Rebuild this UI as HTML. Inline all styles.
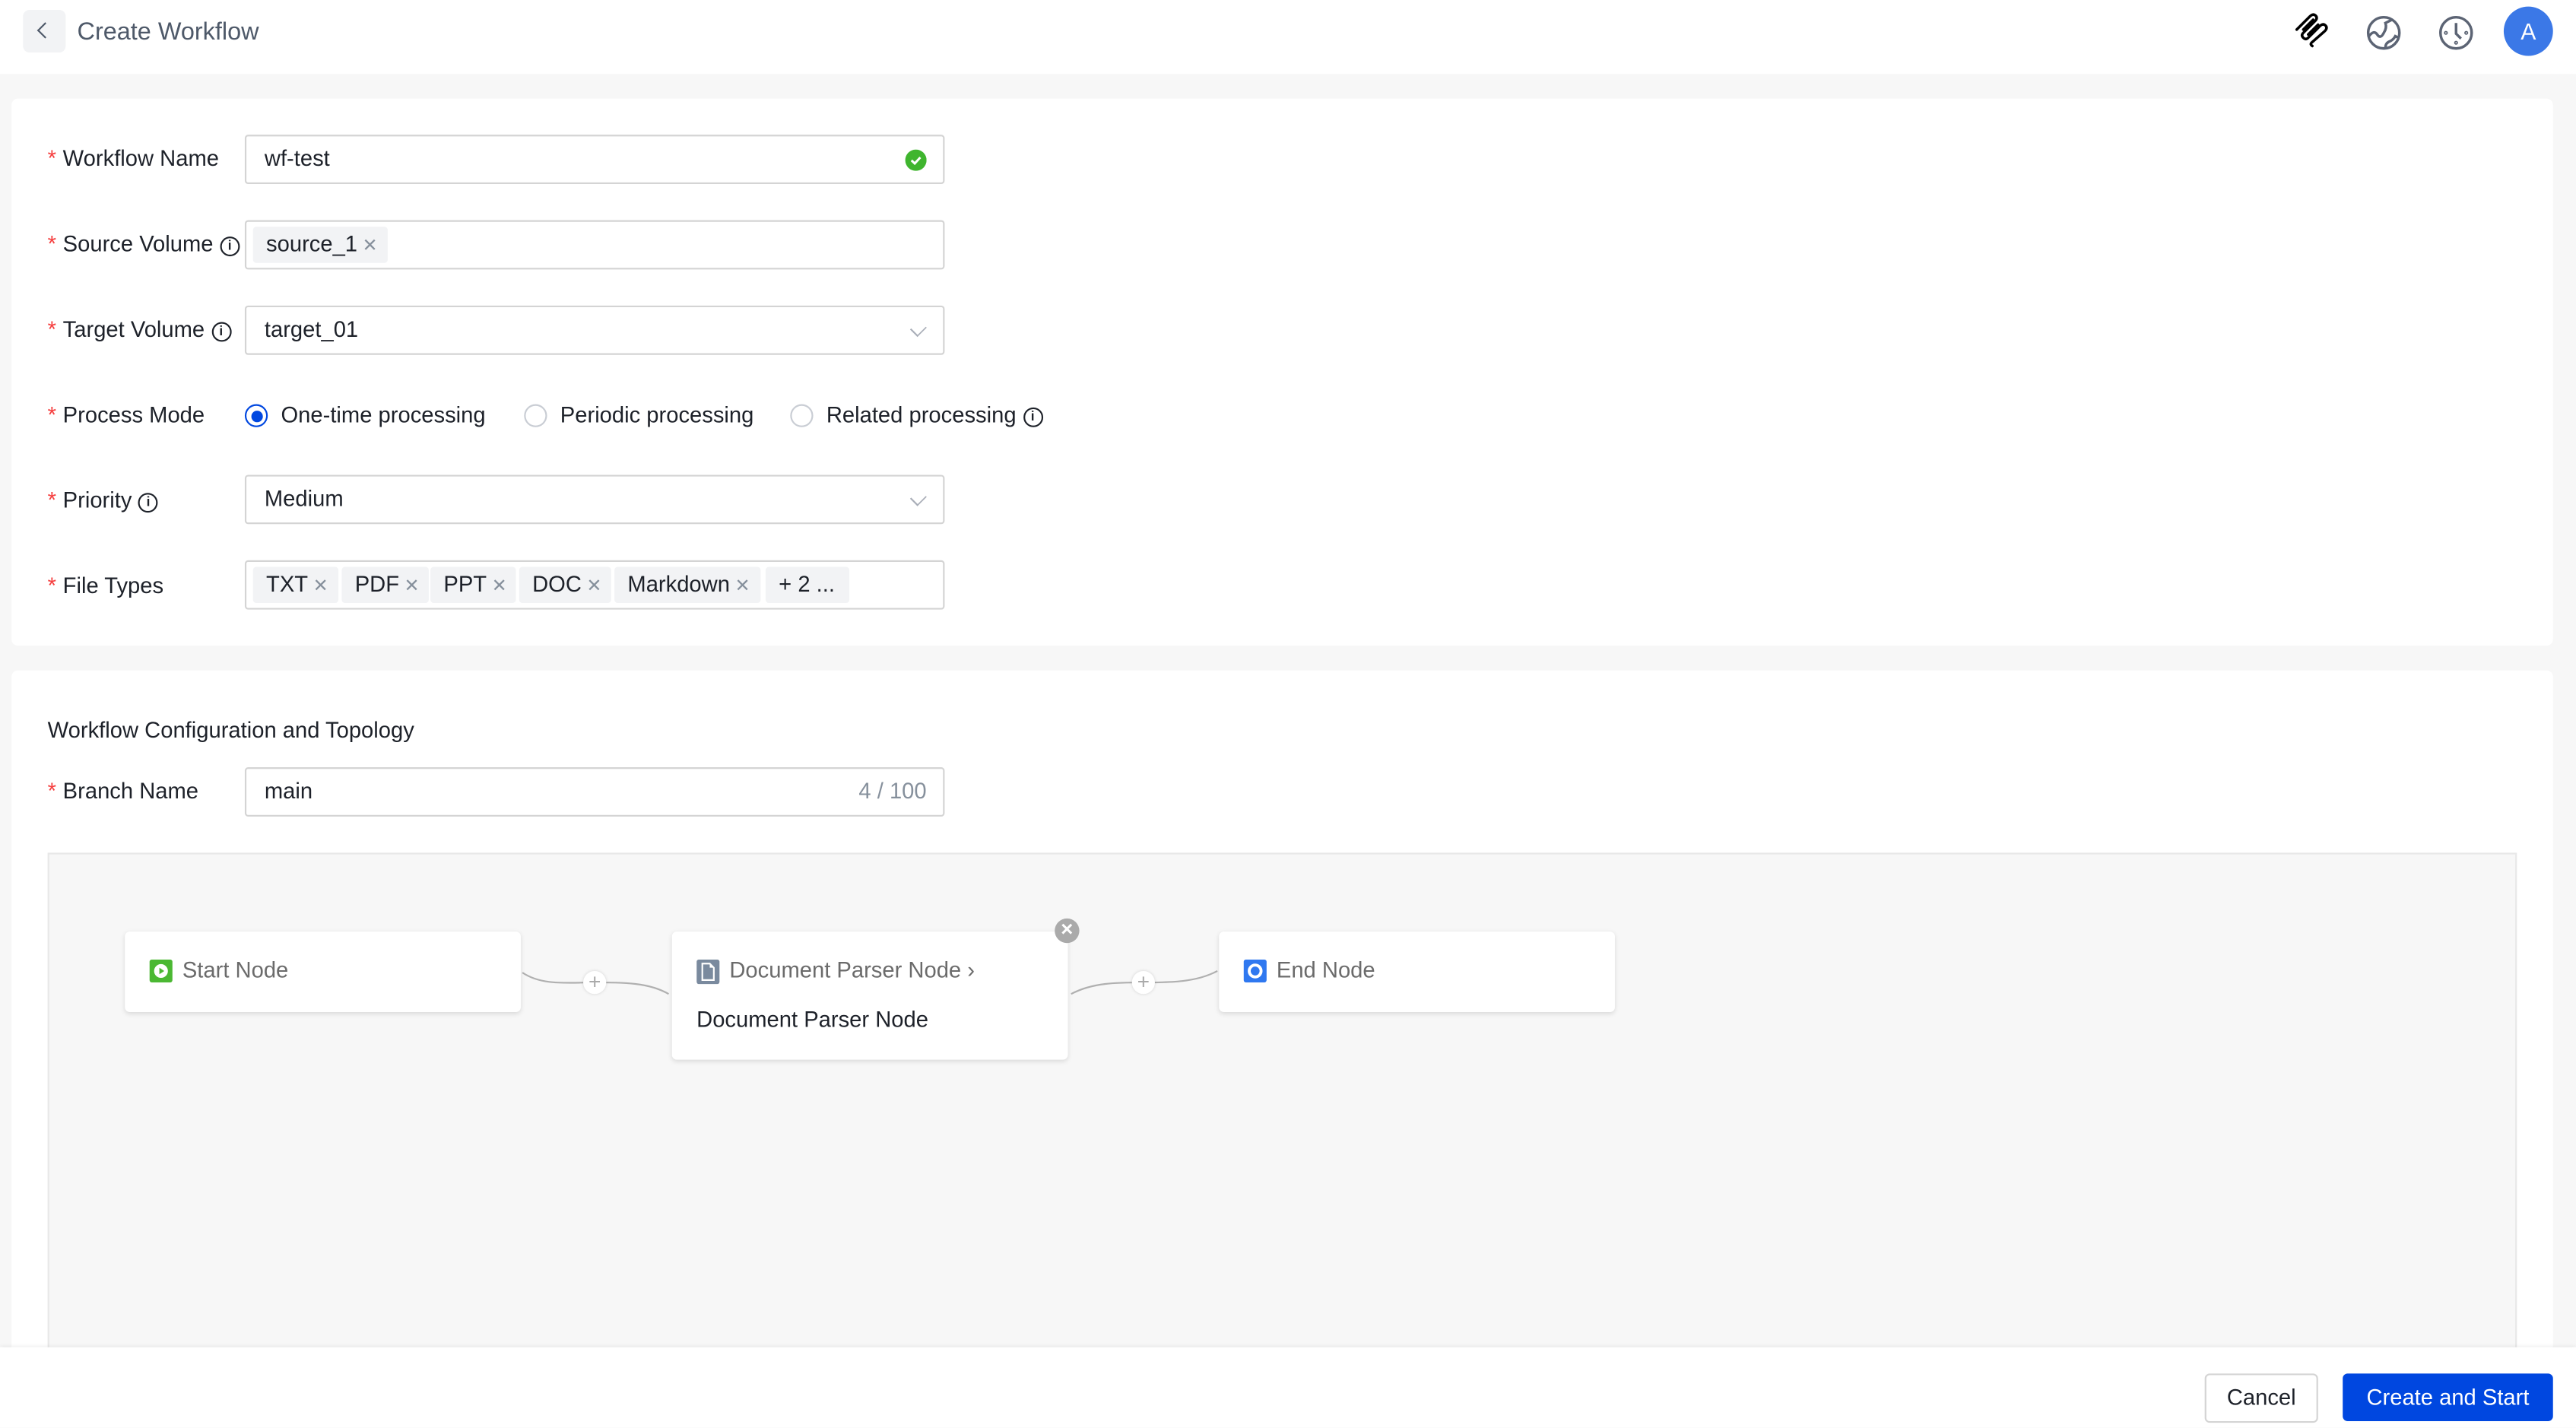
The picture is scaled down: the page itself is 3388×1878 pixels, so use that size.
<!DOCTYPE html>
<html><head><meta charset="utf-8"><style>
html,body{margin:0;padding:0;width:3388px;height:1876px;overflow:hidden;background:#f7f7f7}
#w{position:absolute;left:0;top:0;width:1568px;height:869px;transform:scale(2.160714);transform-origin:0 0;font-family:"Liberation Sans",Arial,sans-serif;color:#1d2129;background:#f7f7f7}
.a{position:absolute}
.hdr{left:0;top:0;width:1568px;height:45px;background:#fff}
.card{background:#fff;border-radius:4px}
.lbl{left:29px;font-size:13.5px;color:#1d2129;line-height:16px;white-space:nowrap}
.lbl .s{color:#f53f3f;margin-right:4px}
.inp{left:149px;width:424px;height:28px;border:1px solid #d4d4d4;border-radius:2px;background:#fff;font-size:13.5px;color:#1d2129;box-sizing:content-box}
.inp .t{position:absolute;left:11px;top:6px;line-height:16px}
.tag{position:absolute;top:3px;height:22px;background:#f2f3f5;border-radius:2px;font-size:13.5px;line-height:22px;padding:0 6px 0 8px;color:#1d2129;white-space:nowrap}
.tag i{font-style:normal;color:#86909c;font-size:11px;margin-left:3px}
.info{display:inline-block;width:10px;height:10px;border:1px solid #1d2129;border-radius:50%;font-size:8px;line-height:10px;text-align:center;font-style:normal;vertical-align:1px;margin-left:4px;font-weight:bold}
.chev{position:absolute;right:11px;top:9px;width:7px;height:7px;border-right:1px solid #a9aeb8;border-bottom:1px solid #a9aeb8;transform:rotate(45deg) scaleX(.8)}
.radio{display:inline-block;width:14px;height:14px;border:1px solid #c9cdd4;border-radius:50%;vertical-align:-3px;margin-right:8px;box-sizing:border-box;background:#fff}
.radio.on{border:1px solid #0047e0;position:relative}
.radio.on:after{content:"";position:absolute;left:2.5px;top:2.5px;width:7px;height:7px;border-radius:50%;background:#0047e0}
.node{background:#fff;border-radius:3px;box-shadow:0 1px 3px rgba(0,0,0,.12);font-size:13.5px}
.ntitle{position:absolute;left:15px;top:16px;color:#6b6b6b;white-space:nowrap;line-height:16px}
.plus{width:14px;height:14px;border-radius:50%;background:#fff;box-shadow:0 0 2px rgba(0,0,0,.15);color:#aaa;font-size:13px;line-height:14px;text-align:center}
.btn{height:28px;border-radius:3px;font-size:13.5px;line-height:28px;text-align:center}
</style></head><body><div id="w">
<div class="a hdr"></div>
<div class="a" style="left:14px;top:6px;width:26px;height:26px;background:#f2f3f5;border-radius:4px"></div>
<div class="a" style="left:24px;top:15px;width:6px;height:6px;border-left:1.3px solid #4e5969;border-bottom:1.3px solid #4e5969;transform:rotate(45deg)"></div>
<div class="a" style="left:47px;top:11px;font-size:15px;color:#4e5969;line-height:17px">Create Workflow</div>
<svg class="a" style="left:1394px;top:6px" width="26" height="24" viewBox="0 0 26 24" fill="none" stroke="#000" stroke-width="1.6" stroke-linecap="round" stroke-linejoin="round"><path d="M4 12 L12 4 Q14 2 15.5 3.5 Q17 5 15 7 L8 14 Q6.5 15.5 8 17 Q9.5 18.5 11 17 L18 10 Q20 8 21.5 9.5 Q23 11 21 13 L13 20 Q12 21 13.5 22"/><path d="M8 12 L14 6"/><path d="M11 15 L17 9"/></svg>
<svg class="a" style="left:1440px;top:9px" width="22" height="22" viewBox="0 0 22 22" fill="none" stroke="#5c6474" stroke-width="1.6"><circle cx="11" cy="11" r="9.5"/><path d="M2 13 Q5 9 7 12 Q9 15 11 11 Q13 8 12 5 Q14 4 16 3"/><path d="M12 20 Q12 17 15 16 Q17 15 18 13 Q20 14 20.5 14"/></svg>
<svg class="a" style="left:1484px;top:9px" width="22" height="22" viewBox="0 0 22 22" fill="none" stroke="#5c6474" stroke-width="1.6"><circle cx="11" cy="11" r="9.5"/><path d="M11 5 V11.5 L14 14.5"/><circle cx="4.8" cy="11" r=".4"/><circle cx="17.2" cy="11" r=".4"/><circle cx="11" cy="17" r=".4"/></svg>
<div class="a" style="left:1524px;top:4px;width:30px;height:30px;border-radius:50%;background:#3b78e7;color:#fff;font-size:14px;line-height:30px;text-align:center">A</div>

<div class="a card" style="left:7px;top:60px;width:1547px;height:333px"></div>
<div class="a lbl" style="top:89px"><span class="s">*</span>Workflow Name</div>
<div class="a inp" style="top:82px"><span class="t">wf-test</span><svg style="position:absolute;right:10px;top:8px" width="13" height="13" viewBox="0 0 13 13"><circle cx="6.5" cy="6.5" r="6.5" fill="#3fb52e"/><path d="M3.8 6.6 L5.8 8.5 L9.2 4.8" stroke="#fff" stroke-width="1.4" fill="none"/></svg></div>

<div class="a lbl" style="top:141px"><span class="s">*</span>Source Volume<i class="info">i</i></div>
<div class="a inp" style="top:134px"><span class="tag" style="left:4px">source_1<i>✕</i></span></div>

<div class="a lbl" style="top:193px"><span class="s">*</span>Target Volume<i class="info">i</i></div>
<div class="a inp" style="top:186px"><span class="t">target_01</span><span class="chev"></span></div>

<div class="a lbl" style="top:245px"><span class="s">*</span>Process Mode</div>
<div class="a" style="left:149px;top:245px;font-size:13.5px;line-height:16px;color:#1d2129;white-space:nowrap"><span class="radio on"></span>One-time processing</div>
<div class="a" style="left:319px;top:245px;font-size:13.5px;line-height:16px;color:#1d2129;white-space:nowrap"><span class="radio"></span>Periodic processing</div>
<div class="a" style="left:481px;top:245px;font-size:13.5px;line-height:16px;color:#1d2129;white-space:nowrap"><span class="radio"></span>Related processing<i class="info">i</i></div>

<div class="a lbl" style="top:297px"><span class="s">*</span>Priority<i class="info">i</i></div>
<div class="a inp" style="top:289px"><span class="t">Medium</span><span class="chev"></span></div>

<div class="a lbl" style="top:349px"><span class="s">*</span>File Types</div>
<div class="a inp" style="top:341px">
<span class="tag" style="left:4px">TXT<i>✕</i></span>
<span class="tag" style="left:58px">PDF<i>✕</i></span>
<span class="tag" style="left:112px">PPT<i>✕</i></span>
<span class="tag" style="left:166px">DOC<i>✕</i></span>
<span class="tag" style="left:224px">Markdown<i>✕</i></span>
<span class="tag" style="left:316px;padding-right:9px">+ 2 ...</span>
</div>

<div class="a card" style="left:7px;top:408px;width:1547px;height:420px"></div>
<div class="a" style="left:29px;top:437px;font-size:13.5px;line-height:16px;color:#1d2129">Workflow Configuration and Topology</div>
<div class="a lbl" style="top:474px"><span class="s">*</span>Branch Name</div>
<div class="a inp" style="top:467px"><span class="t">main</span><span style="position:absolute;right:10px;top:6px;line-height:16px;color:#86909c">4 / 100</span></div>

<div class="a" style="left:29px;top:519px;width:1503px;height:310px;background:#f7f7f7;border:1px solid #e8e8e8;box-sizing:border-box"></div>
<svg class="a" style="left:0;top:0" width="1568" height="869"><path d="M318 592 C330 600 345 598 362 598 C380 598 395 598 407 605" stroke="#b0b0b0" stroke-width="1" fill="none"/><path d="M652 605 C665 598 680 598 696 598 C712 598 728 598 741 591" stroke="#b0b0b0" stroke-width="1" fill="none"/></svg>
<div class="a node" style="left:76px;top:567px;width:241px;height:49px"><svg style="position:absolute;left:15px;top:17px" width="14" height="14" viewBox="0 0 14 14"><rect width="14" height="14" rx="1.5" fill="#4bb833"/><circle cx="7" cy="7" r="4.2" fill="#fff"/><path d="M6 5 L9 7 L6 9Z" fill="#4bb833"/></svg><span class="ntitle" style="left:35px">Start Node</span></div>
<div class="a node" style="left:409px;top:567px;width:241px;height:78px"><svg style="position:absolute;left:15px;top:17px" width="14" height="15" viewBox="0 0 14 15"><rect width="14" height="15" rx="1.5" fill="#7a8a9e"/><path d="M3.5 2.5 H8 L10.5 5 V12.5 H3.5Z" fill="none" stroke="#fff" stroke-width="1"/><path d="M8 2.5 V5 H10.5" fill="#fff"/></svg><span class="ntitle" style="left:35px">Document Parser Node ›</span><span style="position:absolute;left:15px;top:46px;line-height:16px;color:#1d2129">Document Parser Node</span></div>
<div class="a" style="left:642px;top:559px;width:15px;height:15px;border-radius:50%;background:#aaa;color:#fff;font-size:10px;line-height:15px;text-align:center;font-weight:bold">✕</div>
<div class="a node" style="left:742px;top:567px;width:241px;height:49px"><svg style="position:absolute;left:15px;top:17px" width="14" height="14" viewBox="0 0 14 14"><rect width="14" height="14" rx="1.5" fill="#2f78f0"/><circle cx="7" cy="7" r="3.6" fill="none" stroke="#fff" stroke-width="1.8"/></svg><span class="ntitle" style="left:35px">End Node</span></div>
<div class="a plus" style="left:355px;top:591px">+</div>
<div class="a plus" style="left:689px;top:591px">+</div>

<div class="a" style="left:0;top:820px;width:1568px;height:49px;background:#fff;box-shadow:0 -1px 2px rgba(0,0,0,.05)"></div>
<div class="a btn" style="left:1342px;top:836px;width:67px;border:1px solid #d4d4d4;background:#fff;color:#1d2129">Cancel</div>
<div class="a btn" style="left:1426px;top:836px;width:128px;height:29px;background:#0047e0;color:#fff;line-height:29px">Create and Start</div>
</div></body></html>
